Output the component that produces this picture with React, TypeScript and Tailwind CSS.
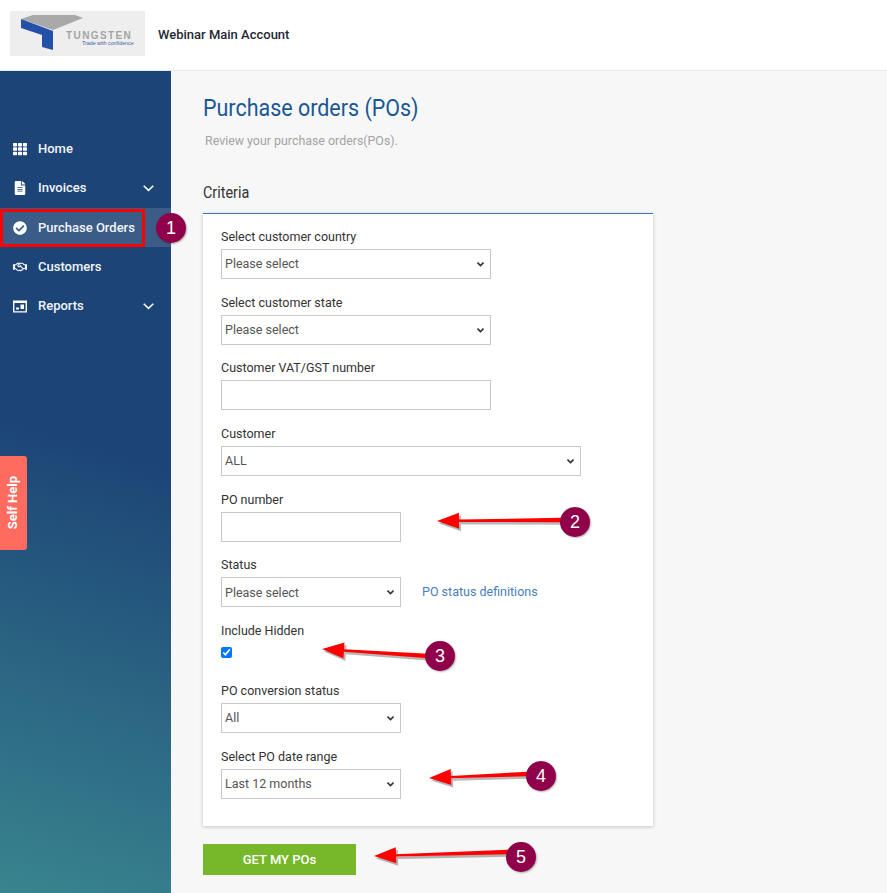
import React from "react";
import { FaTh, FaFileAlt, FaCheckCircle, FaRegHandshake } from "react-icons/fa";

const font = { fontFamily: "Roboto, 'Liberation Sans', sans-serif" };

function Logo() {
  return (
    <div className="relative w-[135px] h-[45px] bg-[#eeeeee] overflow-hidden">
      <svg className="absolute left-0 top-0" width="135" height="45" viewBox="0 0 135 45">
        <polygon points="23,4 65,4 73,7 43,19 11,8" fill="#a9a9a9" />
        <polygon points="11,8 43,20 43,39 32,36 32,24 11,17" fill="#2450a8" />
      </svg>
      <span className="absolute left-[56px] top-[19px] text-[10px] leading-[12px] font-bold tracking-[1.4px] text-[#a3a3a3]" style={{ fontFamily: "'Liberation Sans', sans-serif" }}>TUNGSTEN</span>
      <span className="absolute left-[72px] top-[29px] text-[5.3px] leading-[6px] text-[#3f5fa8] whitespace-nowrap" style={{ fontFamily: "'Liberation Sans', sans-serif" }}>Trade with confidence</span>
    </div>
  );
}

function ReportIcon() {
  return (
    <svg width="14" height="13" viewBox="0 0 14 13" fill="white">
      <path d="M0 0.5h14v12H0zM1.4 3v8.2h11.2V3z" fillRule="evenodd" />
      <rect x="7.5" y="4.5" width="3.5" height="4.5" />
      <rect x="3" y="7.5" width="3" height="2" />
    </svg>
  );
}

function NavChevron() {
  return (
    <svg width="11" height="7" viewBox="0 0 11 7" fill="none" stroke="white" strokeWidth="1.5">
      <path d="M0.7 0.8 L5.5 5.4 L10.3 0.8" />
    </svg>
  );
}

function NavItem({ icon, label, chevron, active }: { icon: React.ReactNode; label: string; chevron?: boolean; active?: boolean }) {
  return (
    <div className={`flex items-center h-[39.3px] pl-[13px] pr-[17px] text-[13px] font-medium text-[#f2f5f8] ${active ? "bg-[#3a5c86]" : ""}`}>
      <span className="w-[14px] h-[14px] flex items-center justify-center text-white text-[14px]">{icon}</span>
      <span className="ml-[11px] flex-1">{label}</span>
      {chevron && <NavChevron />}
    </div>
  );
}

const controlClass = "block h-[30px] bg-white border border-[#c8c8c8] text-[12.5px] text-[#555555] outline-none";

function Field({ label, children, last }: { label: string; children: React.ReactNode; last?: boolean }) {
  return (
    <div className={last ? "" : "mb-[14.7px]"}>
      <div className="h-[21px] leading-[18px] text-[12.5px] text-[#333333]">{label}</div>
      {children}
    </div>
  );
}

function Select({ value, width }: { value: string; width: string }) {
  return (
    <div className={`relative ${width}`}>
      <select className={`${controlClass} w-full appearance-none pl-[3px] pt-[1px]`} defaultValue={value} style={font}>
        <option>{value}</option>
      </select>
      <svg className="absolute right-[7px] top-[13px] pointer-events-none" width="7" height="5" viewBox="0 0 7 5" fill="none" stroke="#333333" strokeWidth="1.6">
        <path d="M0.5 0.6 L3.5 3.6 L6.5 0.6" />
      </svg>
    </div>
  );
}

function Badge({ n, className }: { n: number; className: string }) {
  return (
    <div className={`absolute w-[30px] h-[30px] rounded-full bg-[#90004a] text-white flex items-center justify-center text-[18px] shadow-[1px_1px_2px_rgba(0,0,0,0.3)] ${className}`} style={{ fontFamily: "'Liberation Sans', sans-serif" }}>
      {n}
    </div>
  );
}

function Arrow({ tip, end }: { tip: [number, number]; end: [number, number] }) {
  const [tx, ty] = tip;
  const [ex, ey] = end;
  const dx = ex - tx;
  const dy = ey - ty;
  const len = Math.hypot(dx, dy);
  const ux = dx / len;
  const uy = dy / len;
  const bx = tx + ux * 22;
  const by = ty + uy * 22;
  const px = -uy;
  const py = ux;
  const head = `${tx},${ty} ${bx + px * 8},${by + py * 8} ${bx - px * 8},${by - py * 8}`;
  const tail = `${bx + px * 1.2},${by + py * 1.2} ${ex + px * 2.2},${ey + py * 2.2} ${ex - px * 2.2},${ey - py * 2.2} ${bx - px * 1.2},${by - py * 1.2}`;
  return (
    <g>
      <g transform="translate(2,2.5)" fill="#000000" opacity="0.28">
        <polygon points={head} />
        <polygon points={tail} />
      </g>
      <polygon points={head} fill="#ff0000" />
      <polygon points={tail} fill="#ff0000" />
    </g>
  );
}

export default function App() {
  return (
    <div className="relative w-[887px] h-[893px] overflow-hidden bg-[#f7f7f7] flex flex-col" style={font}>
      <header className="h-[71px] shrink-0 bg-white border-b border-[#e8e8e8] flex items-center pl-[10px] pb-[3px]">
        <Logo />
        <span className="ml-[13px] mt-[2px] text-[13px] font-medium text-[#1f2933]">Webinar Main Account</span>
      </header>
      <div className="flex flex-1 min-h-0">
        <aside className="w-[171px] shrink-0 pt-[58.3px] bg-[linear-gradient(197deg,#1c4476_45%,#39848f_100%)]">
          <NavItem icon={<FaTh />} label="Home" />
          <NavItem icon={<FaFileAlt />} label="Invoices" chevron />
          <NavItem icon={<FaCheckCircle />} label="Purchase Orders" active />
          <NavItem icon={<FaRegHandshake />} label="Customers" />
          <NavItem icon={<ReportIcon />} label="Reports" chevron />
        </aside>
        <main className="flex-1 pl-[32px]">
          <h1 className="mt-[22px] text-[24px] leading-[30px] text-[#1a5796] origin-left scale-x-[0.894] whitespace-nowrap">Purchase orders (POs)</h1>
          <p className="mt-[9px] ml-[2px] text-[12.4px] leading-[18px] text-[#a3a3a3]">Review your purchase orders(POs).</p>
          <h2 className="mt-[33px] text-[16px] leading-[20px] text-[#333333] origin-left scale-x-[0.9]">Criteria</h2>
          <section className="mt-[10px] w-[450px] h-[613px] bg-white border-t border-[#3678bd] shadow-[0_1px_4px_rgba(0,0,0,0.2)] pl-[18px] pt-[14px]">
            <Field label="Select customer country"><Select value="Please select" width="w-[270px]" /></Field>
            <Field label="Select customer state"><Select value="Please select" width="w-[270px]" /></Field>
            <Field label="Customer VAT/GST number"><input className={`${controlClass} w-[270px]`} /></Field>
            <Field label="Customer"><Select value="ALL" width="w-[360px]" /></Field>
            <Field label="PO number"><input className={`${controlClass} w-[180px]`} /></Field>
            <Field label="Status">
              <div className="flex items-center">
                <Select value="Please select" width="w-[180px]" />
                <a className="ml-[21px] text-[12.5px] text-[#4a7ebb]">PO status definitions</a>
              </div>
            </Field>
            <div className="h-[60px]">
              <div className="h-[21px] leading-[18px] text-[12.5px] text-[#333333]">Include Hidden</div>
              <input type="checkbox" defaultChecked className="block w-[11px] h-[11px] accent-[#0075ff] mt-[4px]" />
            </div>
            <Field label="PO conversion status"><Select value="All" width="w-[180px]" /></Field>
            <Field label="Select PO date range" last><Select value="Last 12 months" width="w-[180px]" /></Field>
          </section>
          <button className="mt-[18px] block w-[153px] h-[31px] bg-[#76b82a] text-white text-[13px] font-medium">GET MY POs</button>
        </main>
      </div>

      <button className="absolute left-0 top-[456px] w-[27px] h-[94px] bg-[#ff6b5f] rounded-r-[3px] flex items-center justify-center pr-[2px]">
        <span className="text-white text-[13px] font-bold whitespace-nowrap [writing-mode:vertical-rl] rotate-180">Self Help</span>
      </button>

      <div className="absolute left-0 top-[209px] w-[145px] h-[38px] border-[3px] border-[#ff0000]" />
      <svg className="absolute left-0 top-0 pointer-events-none" width="887" height="893">
        <Arrow tip={[437, 521]} end={[562, 520]} />
        <Arrow tip={[322, 649]} end={[428, 656]} />
        <Arrow tip={[429, 778]} end={[528, 774]} />
        <Arrow tip={[374, 856]} end={[508, 852]} />
      </svg>
      <Badge n={1} className="left-[156px] top-[213px]" />
      <Badge n={2} className="left-[560px] top-[507px]" />
      <Badge n={3} className="left-[425px] top-[641px]" />
      <Badge n={4} className="left-[526px] top-[761px]" />
      <Badge n={5} className="left-[506px] top-[842px]" />
    </div>
  );
}
